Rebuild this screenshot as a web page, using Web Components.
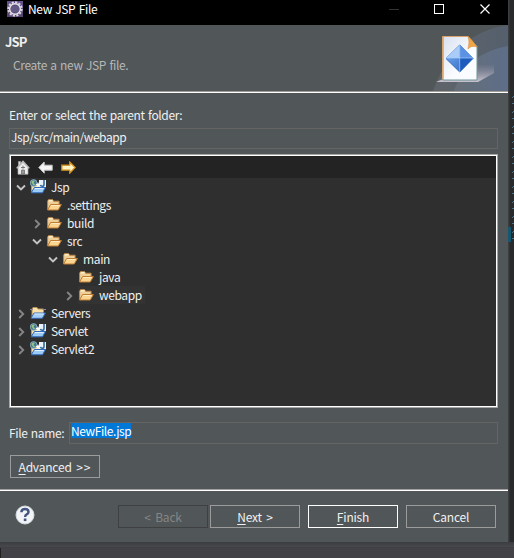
<!DOCTYPE html>
<html lang="en">
<head>
<meta charset="utf-8">
<title>New JSP File</title>
<style>
  body {
    margin: 0;
    width: 514px;
    height: 558px;
    overflow: hidden;
    background: #434347;
    font: 12px/18px "Noto Sans CJK KR", "Noto Sans", sans-serif;
    letter-spacing: -.36px;
    word-spacing: 1px;
    color: #f0f0f0;
  }
</style>
</head>
<body>
<desk-backdrop>
  <wizard-dialog heading="New JSP File">
    <wizard-banner slot="banner" heading="JSP" message="Create a new JSP file."></wizard-banner>
    <field-label>Enter or select the parent folder:</field-label>
    <text-field value="Jsp/src/main/webapp" style="height:21px;margin-top:3px;line-height:15px"></text-field>
    <folder-tree>
      <tree-row depth="0" state="open" icon="web">Jsp</tree-row>
      <tree-row depth="1" icon="folder">.settings</tree-row>
      <tree-row depth="1" state="closed" icon="folder">build</tree-row>
      <tree-row depth="1" state="open" icon="folder">src</tree-row>
      <tree-row depth="2" state="open" icon="folder">main</tree-row>
      <tree-row depth="3" icon="folder">java</tree-row>
      <tree-row depth="3" state="closed" icon="folder" hot>webapp</tree-row>
      <tree-row depth="0" state="closed" icon="project">Servers</tree-row>
      <tree-row depth="0" state="closed" icon="web">Servlet</tree-row>
      <tree-row depth="0" state="closed" icon="web">Servlet2</tree-row>
    </folder-tree>
    <file-row>
      <field-label slot="label">File name:</field-label>
      <text-field value="NewFile.jsp" selected style="height:22px"></text-field>
    </file-row>
    <push-button style="margin:11px 0 0 1px"><u>A</u>dvanced <span style="letter-spacing:1px">&gt;&gt;</span></push-button>
    <push-button slot="buttons" kind="disabled">&lt; Back</push-button>
    <push-button slot="buttons" style="margin-left:2px"><u>N</u>ext &gt;</push-button>
    <push-button slot="buttons" kind="primary" style="margin-left:8px"><u>F</u>inish</push-button>
    <push-button slot="buttons" style="margin-left:8px">Cancel</push-button>
  </wizard-dialog>
</desk-backdrop>

<script>
const ICONS = {
  eclipse: `<svg width="16" height="16" viewBox="0 0 16 16">
    <rect width="16" height="16" fill="#65518c"/>
    <rect y="8" width="16" height="8" fill="#584477"/>
    <circle cx="8" cy="8" r="6.7" fill="none" stroke="#d9d4dc" stroke-width="2" stroke-dasharray="2.2 1.3"/>
    <circle cx="8" cy="8" r="5.3" fill="#5a4f7c" stroke="#e8e5e9" stroke-width="1.5"/>
    <path d="M4 6h8M3.5 8h9M4 10h8" stroke="#6f648f"/>
  </svg>`,
  home: `<svg width="14" height="15" viewBox="0 0 14 15">
    <path d="M2.5 7V1.5h2V5" fill="#ddd" stroke="#999"/>
    <path d="M.7 8.3 7 1.3l6.3 7" fill="#eee" stroke="#bbb" stroke-width="1.3"/>
    <path d="M2 7.5 7 2.5l5 5v6.7H2z" fill="#ededed" stroke="#aaa" stroke-width=".7"/>
    <path d="M5.5 14v-4h3v4z" fill="#999" stroke="#666" stroke-width=".7"/>
    <path d="M5 7.5h4M7 5.7v3" stroke="#777"/>
  </svg>`,
  back: `<svg width="15" height="13" viewBox="0 0 15 13">
    <path d="M.8 6.5 6.2 1v3.200h8v5h-8v3z" fill="#f5f5f5" stroke="#c4c4c4"/>
  </svg>`,
  forward: `<svg width="15" height="13" viewBox="0 0 15 13">
    <path d="M14.2 6.5 8.7 1v3.200H.8v5h7.9v3z" fill="#fff4c6" stroke="#d08c14" stroke-width="1.3"/>
  </svg>`,
  folder: `<svg width="16" height="14" viewBox="-.6 0 16 14">
    <path d="M1 11.7V3.2L2 1.6h4l1 1.6h5.5V6" fill="#efcf98" stroke="#b98443"/>
    <path d="M2 2.8h4" stroke="#fff1cf" stroke-width="1.4"/>
    <path d="M1 12 4 6.5h10.8L11.6 12z" fill="#fbd490" stroke="#bd7d35"/>
    <path d="M4.5 7.5H13" stroke="#ffe9bd"/>
  </svg>`,
  project: `<svg width="16" height="16" viewBox="0 0 16 16">
    <path d="M2 12V4l1-1.5h4L8 4h5.5v4" fill="#f9e0a6" stroke="#b99257"/>
    <path d="M0 4.5h3M12.5 4.5H16" stroke="#8d8698"/>
    <path d="M1 13.3 4 8h11.5l-3.2 5.3z" fill="#a3cff7" stroke="#3668b9"/>
    <path d="M4.5 9h9" stroke="#d4ecff"/>
  </svg>`,
  web: `<svg width="16" height="16" viewBox="0 0 16 16">
    <path d="M1.5 12.5V5.8h11V9" fill="#f9e3b4" stroke="#bc965d"/>
    <path d="M9 1h7v7H9z" fill="#eaf3fd"/>
    <path d="M14 1v4.4q0 1.8-1.8 1.8-1.5 0-1.7-1.4" fill="none" stroke="#34699f" stroke-width="1.6"/>
    <circle cx="3.6" cy="4" r="3.4" fill="#3f789c" stroke="#a9c3c4" stroke-width=".7"/>
    <path d="M1.3 3q2-2.5 3.4-1L3.5 4l1.7 1.4-1.7 1.2z" fill="#9bc67c"/>
    <path d="m8 3 .8 1.8 1.8.8-1.8.8L8 8.2l-.8-1.8-1.8-.8 1.8-.8z" fill="#fff"/>
    <path d="M1.2 13.8 4.3 8.500h11.2l-3 5.3z" fill="#9ccaf7" stroke="#3168bd"/>
    <path d="M5 9.5h8.5" stroke="#e1f2ff"/>
  </svg>`,
  open: `<svg width="10" height="8" viewBox="0 0 10 8"><path d="m1 1.5 4 4 4-4" fill="none" stroke="#c4c4c4" stroke-width="1.9"/></svg>`,
  closed: `<svg width="10" height="10" viewBox="0 0 10 10"><path d="m3.2 1 4 4-4 4" fill="none" stroke="#858585" stroke-width="1.9"/></svg>`,
  help: `<svg width="20" height="20" viewBox="0 0 20 20">
    <circle cx="10" cy="10" r="9" fill="#f2f4f7" stroke="#d3d8df"/>
    <path d="M6.4 7.3q0-3.3 3.6-3.3 3.500 0 3.500 2.900 0 1.600-1.800 2.500-1.600.8-1.600 2.600" fill="none" stroke="#43567e" stroke-width="2.4"/>
    <rect x="8.800" y="13.500" width="2.600" height="2.600" fill="#43567e"/>
  </svg>`,
  banner: `<svg width="76" height="66" viewBox="0 0 76 66">
    <defs>
      <linearGradient id="sweep"><stop stop-color="#697077"/><stop offset="1" stop-color="#58677f"/></linearGradient>
      <linearGradient id="sweep2"><stop stop-color="#666e77"/><stop offset="1" stop-color="#5e6e89"/></linearGradient>
      <linearGradient id="page" x2="1" y2="1"><stop stop-color="#d9e1ef"/><stop offset=".6" stop-color="#fafcff"/></linearGradient>
      <linearGradient id="shade" x2="0" y2="1"><stop stop-color="#9b97a5" stop-opacity="0"/><stop offset="1" stop-color="#c9c4cf"/></linearGradient>
      <linearGradient id="blue" x2="1" y2="1"><stop stop-color="#84b2f2"/><stop offset="1" stop-color="#2160c0"/></linearGradient>
    </defs>
    <path d="M1 66Q22 8 76 0v66z" fill="url(#sweep)" opacity=".55"/>
    <path d="M22 66Q34 28 76 21v45z" fill="url(#sweep2)"/>
    <path d="M45 39h17v9L46 57H4l7-3h34z" fill="url(#shade)"/>
    <path d="M11 11.500h25L45 21.500V55H11z" fill="url(#page)" stroke="#70979b"/>
    <path d="M10.500 54V11.500H36" fill="none" stroke="#d9a36c"/>
    <path d="M36 11q5 5 9 11-6-2-9 2 2-7 0-13z" fill="#f3a744" stroke="#d68a3a" stroke-width=".6"/>
    <path d="M27.700 20 41 33.500 27.700 47 14 33.500z" fill="url(#blue)" stroke="#3268bc"/>
    <path d="M27.700 20v13H14z" fill="#a9ccf8"/><path d="M27.700 20 41 33H27.700z" fill="#5b92e3"/>
    <path d="M27.700 47V33H41z" fill="#1d5cbc"/><path d="M14 33h27M27.700 20v27" stroke="#a7cbfa" stroke-width=".7"/>
  </svg>`
};

class DeskBackdrop extends HTMLElement {
  constructor() {
    super();
    this.attachShadow({ mode: 'open' });
    this.shadowRoot.innerHTML = `
      <style>
        :host { display: flex; flex-direction: column; height: 558px; }
        .top { display: flex; height: 542px; }
        .edge {
          width: 6px;
          background: linear-gradient(90deg, #3b3d3e 0 1px, #292a2b 2px 100%);
        }
        svg { display: block; }
        .under { height: 5px; background: linear-gradient(#3b3c3f, #47494c); }
        .floor { flex: 1; background: #434347; border-top: 1px solid #3f4043; box-sizing: border-box; }
        .floor::before { content: ""; display: block; width: 1px; height: 10px; background: #222; }
      </style>
      <div class="top">
        <slot></slot>
        <div class="edge">
          <svg width="6" height="542">
            <rect y="227" width="3" height="15" fill="#15576f"/>
            <g id="marks" stroke="#4f7488"></g>
          </svg>
        </div>
      </div>
      <div class="under"></div>
      <div class="floor"></div>
    `;
    let marks = '';
    for (let y = 97; y < 240; y += 15) {
      marks += `<path d="M5 ${y - 0.5}h1M4 ${y + 0.5}h1M4 ${y + 6.5}h2"/>`;
    }
    this.shadowRoot.getElementById('marks').innerHTML = marks;
  }
}

class WizardDialog extends HTMLElement {
  constructor() {
    super();
    this.attachShadow({ mode: 'open' });
    this.shadowRoot.innerHTML = `
      <style>
        :host {
          display: flex;
          flex-direction: column;
          width: 508px;
          height: 542px;
          background: #515658;
        }
        .bar { display: flex; height: 25px; background: #000; color: #fff; }
        .app { margin: 1px 5px 0 7px; }
        .title { flex: 1; }
        .bar .controls { display: block; }
        .body { height: 396px; padding: 13px 10px 0 9px; box-sizing: border-box; }
        .footer {
          display: flex;
          height: 53px;
          box-sizing: border-box;
          padding: 15px 12px 0 15px;
          border-top: 1px solid #a39e9f;
          box-shadow: inset 0 1px #fff;
        }
        .help { flex: 1; }
      </style>
      <div class="bar">
        <div class="app">${ICONS.eclipse}</div>
        <div class="title"></div>
        <svg class="controls" width="120" height="20">
          <path d="M1 9.500h10" stroke="#333"/>
          <rect x="46.500" y="4.500" width="9" height="9" fill="none" stroke="#fff"/>
          <path d="m92.500 4.500 9 9m0-9-9 9" stroke="#fff" stroke-width="1.200"/>
        </svg>
      </div>
      <slot name="banner"></slot>
      <div class="body"><slot></slot></div>
      <div class="footer"><div class="help">${ICONS.help}</div><slot name="buttons"></slot></div>
    `;
  }

  connectedCallback() {
    this.shadowRoot.querySelector('.title').textContent = this.getAttribute('heading');
  }
}

class WizardBanner extends HTMLElement {
  constructor() {
    super();
    this.attachShadow({ mode: 'open' });
    this.shadowRoot.innerHTML = `
      <style>
        :host {
          display: flex;
          height: 68px;
          box-sizing: border-box;
          border-bottom: 1px solid #fff;
          box-shadow: inset 0 -1px #a39e98;
        }
        .text { flex: 1; padding: 8px 0 0 5px; }
        .name { font-weight: bold; font-size: 13px; letter-spacing: -.9px; }
        .message { color: #b7b7b7; margin: 5px 0 0 8px; }
        svg { display: block; }
      </style>
      <div class="text"><div class="name"></div><div class="message"></div></div>
      ${ICONS.banner}
    `;
  }

  connectedCallback() {
    this.shadowRoot.querySelector('.name').textContent = this.getAttribute('heading');
    this.shadowRoot.querySelector('.message').textContent = this.getAttribute('message');
  }
}

class FieldLabel extends HTMLElement {
  constructor() {
    super();
    this.attachShadow({ mode: 'open' });
    this.shadowRoot.innerHTML = `
      <style>:host { display: block; height: 19px; white-space: nowrap; }</style>
      <slot></slot>
    `;
  }
}

class TextField extends HTMLElement {
  constructor() {
    super();
    this.attachShadow({ mode: 'open' });
    this.shadowRoot.innerHTML = `
      <style>
        :host {
          display: block;
          box-sizing: border-box;
          border: 1px solid #666463;
          padding-left: 1px;
          line-height: 16px;
          letter-spacing: -.43px;
        }
        span { display: inline-block; height: 15px; }
        :host([selected]) span { background: #0078d7; color: #fff; }
      </style>
      <span></span>
    `;
  }

  connectedCallback() {
    this.shadowRoot.querySelector('span').textContent = this.getAttribute('value');
  }
}

class FolderTree extends HTMLElement {
  constructor() {
    super();
    this.attachShadow({ mode: 'open' });
    this.shadowRoot.innerHTML = `
      <style>
        :host {
          display: block;
          box-sizing: border-box;
          height: 254px;
          margin-top: 5px;
          background: #2f2f2f;
          border: 1px solid #a5a5a5;
          box-shadow: inset 0 0 0 1px #fff;
          padding: 1px;
        }
        .tools { display: flex; align-items: center; gap: 8px; height: 22px; padding-left: 5px; background: #232323; }
        svg { display: block; }
      </style>
      <div class="tools">${ICONS.home}${ICONS.back}${ICONS.forward}</div>
      <slot></slot>
    `;
  }
}

class TreeRow extends HTMLElement {
  constructor() {
    super();
    this.attachShadow({ mode: 'open' });
    this.shadowRoot.innerHTML = `
      <style>
        :host { display: flex; height: 18px; align-items: center; }
        .arrow { display: flex; align-items: center; width: 14px; height: 18px; padding-top: 2px; box-sizing: border-box; }
        .item { display: flex; align-items: center; padding-right: 3px; }
        :host([hot]) .item { background: #333; }
        .icon { display: flex; width: 21px; }
      </style>
      <div class="arrow"></div>
      <div class="item"><div class="icon"></div><slot></slot></div>
    `;
  }

  connectedCallback() {
    this.style.paddingLeft = 5 + 16 * this.getAttribute('depth') + 'px';
    this.shadowRoot.querySelector('.arrow').innerHTML = ICONS[this.getAttribute('state')] || '';
    this.shadowRoot.querySelector('.icon').innerHTML = ICONS[this.getAttribute('icon')];
  }
}

class FileRow extends HTMLElement {
  constructor() {
    super();
    this.attachShadow({ mode: 'open' });
    this.shadowRoot.innerHTML = `
      <style>
        :host { display: flex; margin-top: 14px; }
        .label { width: 60px; padding-top: 2px; }
        .field { flex: 1; }
      </style>
      <div class="label"><slot name="label"></slot></div>
      <div class="field"><slot></slot></div>
    `;
  }
}

class PushButton extends HTMLElement {
  constructor() {
    super();
    this.attachShadow({ mode: 'open' });
    this.shadowRoot.innerHTML = `
      <style>
        :host {
          display: block;
          box-sizing: border-box;
          width: 90px;
          height: 23px;
          border: 1px solid #9b9b9b;
          text-align: center;
          line-height: 21px;
          white-space: nowrap;
          letter-spacing: -.2px;
          word-spacing: 2px;
        }
        :host([kind=disabled]) { border-color: #3e4041; color: #858585; }
        :host([kind=primary]) { border-color: #fff; }
        ::slotted(u) { text-underline-offset: 2px; }
      </style>
      <slot></slot>
    `;
  }
}

customElements.define('desk-backdrop', DeskBackdrop);
customElements.define('wizard-dialog', WizardDialog);
customElements.define('wizard-banner', WizardBanner);
customElements.define('field-label', FieldLabel);
customElements.define('text-field', TextField);
customElements.define('folder-tree', FolderTree);
customElements.define('tree-row', TreeRow);
customElements.define('file-row', FileRow);
customElements.define('push-button', PushButton);
</script>
</body>
</html>
